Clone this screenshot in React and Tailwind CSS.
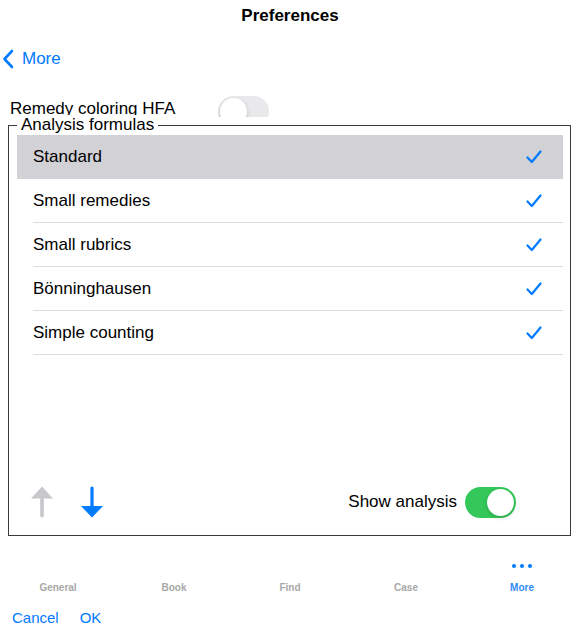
import React from "react";

const rows = ["Standard", "Small remedies", "Small rubrics", "Bönninghausen", "Simple counting"];
const tabs = ["General", "Book", "Find", "Case", "More"];

function Check() {
  return (
    <svg width="16" height="14" viewBox="0 0 16 14" fill="none">
      <path d="M1.5 7.5 L5.8 12 L14.5 1.5" stroke="#007aff" strokeWidth="2.2" strokeLinecap="round" strokeLinejoin="round" />
    </svg>
  );
}

export default function App() {
  return (
    <div className="w-[580px] h-[640px] bg-white text-black flex flex-col overflow-hidden" style={{ fontFamily: '"Liberation Sans", Arial, sans-serif' }}>
      <div className="h-[30px] pt-[2px] flex items-center justify-center text-[17px] font-bold leading-[20px]">Preferences</div>
      <div className="mt-[6px] h-[44px] pt-[2px] flex items-center pl-[2px] text-[#007aff] text-[17px]">
        <svg width="12" height="20" viewBox="0 0 12 20" fill="none">
          <path d="M10 2 L2.5 10 L10 18" stroke="#007aff" strokeWidth="2.6" strokeLinecap="round" strokeLinejoin="round" />
        </svg>
        <span className="ml-[8px]">More</span>
      </div>
      <div className="mt-[16px] h-[21px] flex items-start pl-[10px]">
        <div className="w-[208px] text-[17px] leading-[21px] mt-[2px]">Remedy coloring HFA</div>
        <div className="h-[21px] overflow-hidden">
          <div className="w-[51px] h-[31px] rounded-full bg-[#e9e9eb] p-[2px] flex">
            <div className="w-[27px] h-[27px] rounded-full bg-white shadow-[0_2px_4px_rgba(0,0,0,0.2)]"></div>
          </div>
        </div>
      </div>
      <div className="relative mt-[8px] ml-[8px] w-[563px] h-[411px] border border-[#3a3a3a] flex flex-col">
        <div className="absolute left-[8px] top-[-11px] px-[4px] bg-white text-[17px] leading-[20px]">Analysis formulas</div>
        <div className="mt-[9px] ml-[8px] mr-[7px] flex flex-col">
          {rows.map((r, i) => (
            <div key={r} className={i === 0 ? "h-[44px] bg-[#d1d1d6] flex items-center pl-[16px] pr-[21px]" : "h-[44px] flex items-center ml-[16px] pr-[21px] border-b border-[#dcdcdf]"}>
              <span className="flex-1 text-[17px]">{r}</span>
              <Check />
            </div>
          ))}
        </div>
        <div className="flex-1"></div>
        <div className="flex items-center pl-[22px] pr-[54px] pb-[17px]">
          <svg width="22" height="32" viewBox="0 0 22 32">
            <polygon points="0,12.5 11,0.5 22,12.5 12.6,12.5 12.6,30 9.4,30 9.4,12.5" fill="#c7c7cc" />
            <rect x="9.4" y="10" width="3.2" height="21.5" rx="1.6" fill="#c7c7cc" />
          </svg>
          <svg className="ml-[28px]" width="22" height="32" viewBox="0 0 22 32">
            <rect x="9.4" y="0.5" width="3.2" height="22" rx="1.6" fill="#007aff" />
            <polygon points="0,20 22,20 11,31.5" fill="#007aff" />
          </svg>
          <div className="flex-1"></div>
          <span className="text-[17px] mr-[8px]">Show analysis</span>
          <div className="w-[51px] h-[31px] rounded-full bg-[#34c759] p-[2px] flex justify-end">
            <div className="w-[27px] h-[27px] rounded-full bg-white shadow-[0_2px_4px_rgba(0,0,0,0.15)]"></div>
          </div>
        </div>
      </div>
      <div className="mt-[14px] grid grid-cols-5">
        {tabs.map((t) => (
          <div key={t} className="flex flex-col items-center">
            <div className="h-[32px] flex items-center justify-center gap-[4px]">
              {t === "More" && (
                <>
                  <span className="w-[4px] h-[4px] rounded-full bg-[#007aff]"></span>
                  <span className="w-[4px] h-[4px] rounded-full bg-[#007aff]"></span>
                  <span className="w-[4px] h-[4px] rounded-full bg-[#007aff]"></span>
                </>
              )}
            </div>
            <div className={t === "More" ? "text-[10px] font-bold leading-[12px] text-[#2f8cf5]" : "text-[10px] font-bold leading-[12px] text-[#a8a8a8]"}>{t}</div>
          </div>
        ))}
      </div>
      <div className="mt-[14px] h-[20px] flex items-center pl-[12px] gap-[21px] text-[15px] text-[#007aff]">
        <span>Cancel</span>
        <span>OK</span>
      </div>
    </div>
  );
}
